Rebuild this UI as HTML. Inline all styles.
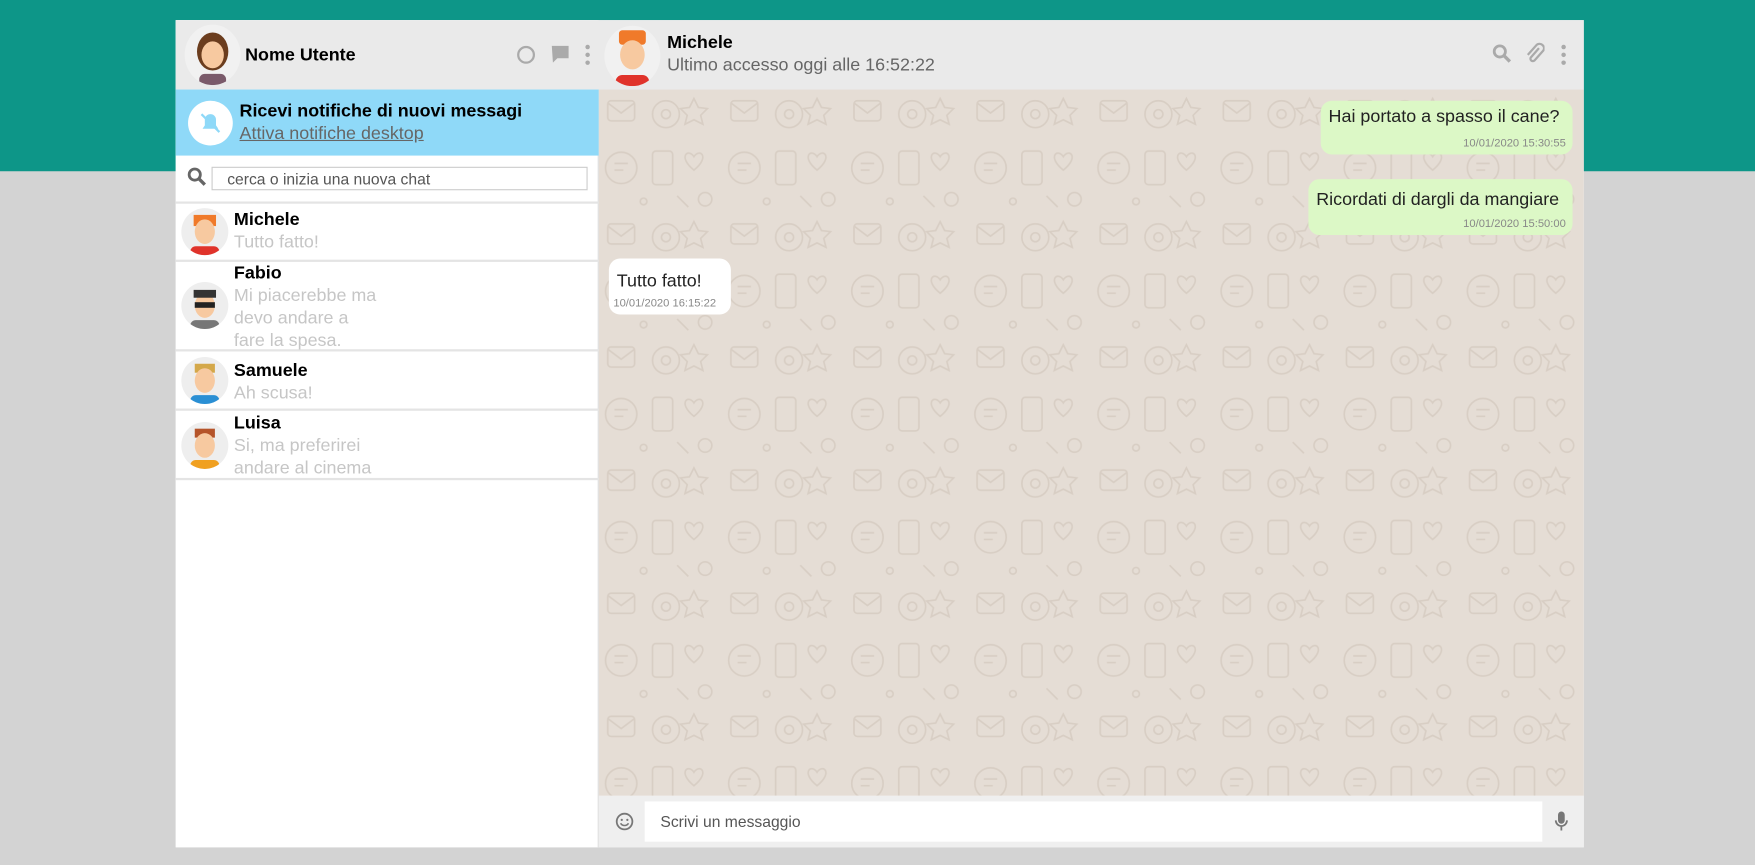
<!DOCTYPE html>
<html><head><meta charset="utf-8"><style>
*{margin:0;padding:0;box-sizing:border-box}
html,body{width:1755px;height:865px;overflow:hidden}
body{background:#d3d3d3;font-family:"Liberation Sans",Roboto,sans-serif;position:relative}
#w{position:absolute;left:0;top:0;width:1568px;height:773px;transform:scale(1.11926);transform-origin:0 0}
.top{position:absolute;left:0;top:0;width:1568px;height:153px;background:#0d9688}
.app{position:absolute;left:157px;top:18px;width:1258px;height:739px;background:#fff}
.side{position:absolute;left:0;top:0;width:378px;height:739px;background:#fff;border-right:1px solid #ddd}
.hdr{position:absolute;left:0;top:0;height:62px;background:#eaeaea}
.av{position:absolute;border-radius:50%;background:#f1f1f1;overflow:hidden}
.notif{position:absolute;left:0;top:62px;width:378px;height:59px;background:#8fd9f8}
.item{position:absolute;left:0;width:378px;border-bottom:2px solid #e4e4e4}
.nm{position:absolute;left:52px;font-weight:bold;font-size:16px;color:#000}
.ms{position:absolute;left:52px;font-size:16px;color:#c6c6c6;line-height:20px}
.chat{position:absolute;left:378px;top:62px;width:880px;height:631px;background:#e5ddd5;overflow:hidden}
.b{position:absolute;border-radius:10px;padding:6px 7px 0 7px;font-size:16px;color:#222}
.b small{position:absolute;right:6px;bottom:4px;font-size:10px;color:#888}
</style></head><body><div id="w">
<div class="top"></div>
<div class="app">
 <div class="side">
  <div class="hdr" style="width:378px"></div>
  <div class="av" style="left:8px;top:4px;width:50px;height:54px">
   <svg width="50" height="54"><ellipse cx="25" cy="24" rx="14" ry="17" fill="#6b3d1e"/><ellipse cx="25" cy="27" rx="10" ry="12" fill="#f7c9a0"/><rect x="13" y="44" width="24" height="12" rx="5" fill="#7a5a6a"/></svg>
  </div>
  <div style="position:absolute;left:62px;top:23px;font-weight:bold;font-size:16px">Nome Utente</div>
  <svg style="position:absolute;left:303px;top:21px" width="20" height="20"><circle cx="10" cy="10" r="7" fill="none" stroke="#aaa" stroke-width="2"/></svg>
  <svg style="position:absolute;left:334px;top:21px" width="20" height="20"><path d="M2 2h15v11H7l-4 4z" fill="#aaa"/></svg>
  <svg style="position:absolute;left:364px;top:21px" width="8" height="20"><circle cx="4" cy="3" r="2" fill="#aaa"/><circle cx="4" cy="10" r="2" fill="#aaa"/><circle cx="4" cy="17" r="2" fill="#aaa"/></svg>
  <div class="notif">
   <div style="position:absolute;left:11px;top:10px;width:40px;height:40px;border-radius:50%;background:#fff"><svg width="40" height="40"><path d="M13 25h14l-2-3v-5a5 5 0 0 0-10 0v5z" fill="#8fd9f8"/><line x1="12" y1="12" x2="28" y2="28" stroke="#8fd9f8" stroke-width="2"/></svg></div>
   <div style="position:absolute;left:57px;top:11px;font-weight:bold;font-size:16px">Ricevi notifiche di nuovi messagi</div>
   <div style="position:absolute;left:57px;top:31px;font-size:16px;color:#666;text-decoration:underline">Attiva notifiche desktop</div>
  </div>
  <svg style="position:absolute;left:10px;top:131px" width="18" height="18"><circle cx="7" cy="7" r="5" fill="none" stroke="#666" stroke-width="2.5"/><line x1="11" y1="11" x2="16" y2="16" stroke="#666" stroke-width="3"/></svg>
  <div style="position:absolute;left:32px;top:131px;width:336px;height:21px;border:1px solid #ccc;font-size:14px;color:#555;padding:2px 0 0 13px">cerca o inizia una nuova chat</div>
  <div class="item" style="top:162px;height:54px;border-top:2px solid #e4e4e4"><div class="av" style="left:5px;top:4px;width:42px;height:42px;background:#eee"><svg width="42" height="42"><rect x="11" y="6" width="20" height="10" fill="#f07a2a"/><ellipse cx="21" cy="21" rx="9" ry="11" fill="#f7c9a0"/><rect x="8" y="34" width="26" height="10" rx="5" fill="#e0332b"/></svg></div><div class="nm" style="top:6px">Michele</div><div class="ms" style="top:25px">Tutto fatto!</div></div>
  <div class="item" style="top:216px;height:80px"><div class="av" style="left:5px;top:18px;width:42px;height:42px;background:#eee"><svg width="42" height="42"><ellipse cx="21" cy="21" rx="9" ry="11" fill="#f7c9a0"/><rect x="11" y="7" width="20" height="7" fill="#333"/><rect x="12" y="18" width="18" height="5" fill="#222"/><rect x="8" y="34" width="26" height="10" rx="5" fill="#777"/></svg></div><div class="nm" style="top:2px">Fabio</div><div class="ms" style="top:21px">Mi piacerebbe ma<br>devo andare a<br>fare la spesa.</div></div>
  <div class="item" style="top:296px;height:53px"><div class="av" style="left:5px;top:5px;width:42px;height:42px;background:#eee"><svg width="42" height="42"><rect x="12" y="6" width="18" height="8" fill="#d4a84a"/><ellipse cx="21" cy="21" rx="9" ry="11" fill="#f7c9a0"/><rect x="8" y="34" width="26" height="10" rx="5" fill="#2a8fd4"/></svg></div><div class="nm" style="top:9px">Samuele</div><div class="ms" style="top:28px">Ah scusa!</div></div>
  <div class="item" style="top:349px;height:62px"><div class="av" style="left:5px;top:10px;width:42px;height:42px;background:#eee"><svg width="42" height="42"><rect x="12" y="6" width="18" height="8" fill="#b5542a"/><ellipse cx="21" cy="21" rx="9" ry="11" fill="#f7c9a0"/><rect x="8" y="34" width="26" height="10" rx="5" fill="#f0a020"/></svg></div><div class="nm" style="top:3px">Luisa</div><div class="ms" style="top:22px">Si, ma preferirei<br>andare al cinema</div></div>
 </div>
 <div class="hdr" style="left:378px;width:880px"></div>
 <div class="av" style="left:383px;top:5px;width:50px;height:54px"><svg width="50" height="54"><rect x="13" y="4" width="24" height="13" rx="3" fill="#f07a2a"/><ellipse cx="25" cy="26" rx="11" ry="13" fill="#f7c9a0"/><rect x="10" y="44" width="30" height="12" rx="6" fill="#e0332b"/></svg></div>
 <div style="position:absolute;left:439px;top:12px;font-weight:bold;font-size:16px">Michele</div>
 <div style="position:absolute;left:439px;top:32px;font-size:16px;color:#666">Ultimo accesso oggi alle 16:52:22</div>
 <svg style="position:absolute;left:1176px;top:21px" width="18" height="18"><circle cx="7" cy="7" r="5" fill="none" stroke="#aaa" stroke-width="2.5"/><line x1="11" y1="11" x2="16" y2="16" stroke="#aaa" stroke-width="3"/></svg>
 <svg style="position:absolute;left:1207px;top:20px" width="16" height="20"><path d="M11 5l-7 8a2 2 0 0 0 3 3l8-9a4 4 0 0 0-6-5l-8 9" fill="none" stroke="#aaa" stroke-width="2"/></svg>
 <svg style="position:absolute;left:1236px;top:21px" width="8" height="20"><circle cx="4" cy="3" r="2" fill="#aaa"/><circle cx="4" cy="10" r="2" fill="#aaa"/><circle cx="4" cy="17" r="2" fill="#aaa"/></svg>
 <div class="chat">
  <svg width="880" height="631" style="position:absolute;left:0;top:0"><defs><pattern id="p" width="110" height="110" patternUnits="userSpaceOnUse"><g fill="none" stroke="#d8cec4" stroke-width="1.5"><rect x="8" y="10" width="24" height="18" rx="3"/><path d="M8 12l12 9 12-9"/><circle cx="60" cy="22" r="12"/><circle cx="60" cy="22" r="4"/><path d="M85 8l4 8 8 1-6 6 2 8-8-4-8 4 2-8-6-6 8-1z"/><circle cx="20" cy="70" r="14"/><path d="M14 66h12M14 72h8"/><rect x="48" y="55" width="18" height="30" rx="3"/><path d="M85 60c5-8 15 0 0 12c-15-12-5-20 0-12z"/><circle cx="40" cy="100" r="3"/><circle cx="95" cy="98" r="6"/><path d="M70 95l10 10"/></g></pattern></defs><rect width="880" height="631" fill="url(#p)"/></svg>
  <div class="b" style="right:10px;top:10px;width:225px;height:48px;background:#dcf8c6">Hai portato a spasso il cane?<small>10/01/2020 15:30:55</small></div>
  <div class="b" style="right:10px;top:80px;width:236px;height:50px;background:#dcf8c6;padding-top:10px">Ricordati di dargli da mangiare<small>10/01/2020 15:50:00</small></div>
  <div class="b" style="left:9px;top:151px;width:109px;height:50px;background:#fff;padding-top:12px">Tutto fatto!<small style="left:4px;right:auto">10/01/2020 16:15:22</small></div>
 </div>
 <div style="position:absolute;left:378px;top:693px;width:880px;height:46px;background:#efefef"></div>
 <svg style="position:absolute;left:392px;top:707px" width="18" height="18"><circle cx="9" cy="9" r="7" fill="none" stroke="#777" stroke-width="1.6"/><circle cx="6.5" cy="7.5" r="1" fill="#777"/><circle cx="11.5" cy="7.5" r="1" fill="#777"/><path d="M5.5 10.5a4 4 0 0 0 7 0" fill="none" stroke="#777" stroke-width="1.4"/></svg>
 <div style="position:absolute;left:419px;top:698px;width:802px;height:36px;background:#fff;font-size:14px;color:#555;padding:10px 14px">Scrivi un messaggio</div>
 <svg style="position:absolute;left:1231px;top:706px" width="14" height="20"><rect x="4" y="1" width="6" height="11" rx="3" fill="#777"/><path d="M2 9a5 5 0 0 0 10 0M7 14v4" fill="none" stroke="#777" stroke-width="1.6"/></svg>
</div>
</div></body></html>
